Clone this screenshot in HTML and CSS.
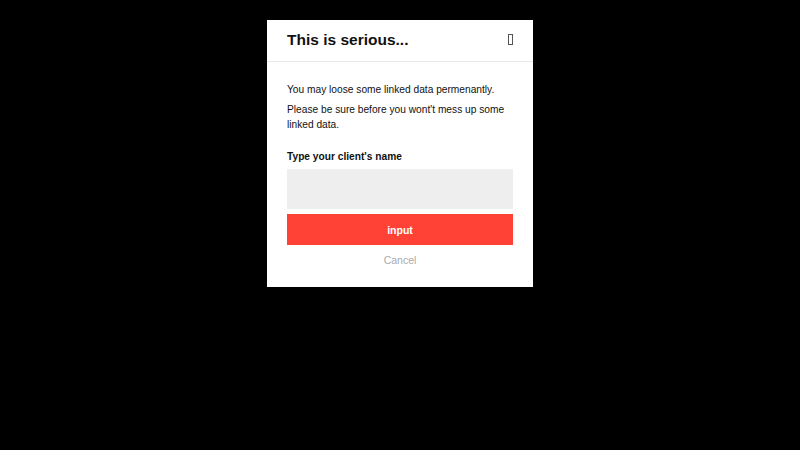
FILE: index.html
```html
<!DOCTYPE html>
<html>
<head>
<meta charset="utf-8">
<link rel="stylesheet" href="styles.css">
</head>
<body>
<div class="overlay">
  <div class="modal">
    <div class="header">
      <h1 class="title">This is serious...</h1>
      <span class="close" aria-label="close"></span>
    </div>
    <div class="body">
      <p class="text">You may loose some linked data permenantly.</p>
      <p class="text">Please be sure before you wont't mess up some linked data.</p>
      <label class="label">Type your client's name</label>
      <div class="field"></div>
      <div class="btn">input</div>
      <div class="cancel">Cancel</div>
    </div>
  </div>
</div>
</body>
</html>
```
FILE: styles.css
```css
html, body {
  margin: 0;
  padding: 0;
  background: #000;
  font-family: "Liberation Sans", Arial, sans-serif;
}
.overlay {
  width: 800px;
  height: 450px;
  display: flex;
  justify-content: center;
  align-items: flex-start;
  padding-top: 20px;
  box-sizing: border-box;
}
.modal {
  width: 266px;
  background: #fff;
}
.header {
  display: flex;
  align-items: center;
  justify-content: space-between;
  padding: 9px 20px 11px;
  border-bottom: 1px solid #e8e8e8;
}
.title {
  margin: 0;
  font-size: 15.5px;
  line-height: 21px;
  font-weight: bold;
  color: #111;
}
.close {
  width: 3px;
  height: 9px;
  border: 1px solid #555;
}
.body {
  padding: 20px 20px 19px;
  display: flex;
  flex-direction: column;
}
.text {
  margin: 0 0 5px;
  font-size: 10.2px;
  line-height: 15px;
  color: #111;
}
.label {
  margin-top: 12px;
  font-size: 10.2px;
  line-height: 15px;
  font-weight: bold;
  color: #111;
}
.field {
  margin-top: 5px;
  height: 40px;
  background: #eee;
}
.btn {
  margin-top: 5px;
  height: 31px;
  background: #ff4136;
  color: #fff;
  font-size: 10.5px;
  font-weight: bold;
  display: flex;
  align-items: center;
  justify-content: center;
}
.cancel {
  margin-top: 8px;
  text-align: center;
  font-size: 10.5px;
  line-height: 15px;
  color: #aaa;
}
```
